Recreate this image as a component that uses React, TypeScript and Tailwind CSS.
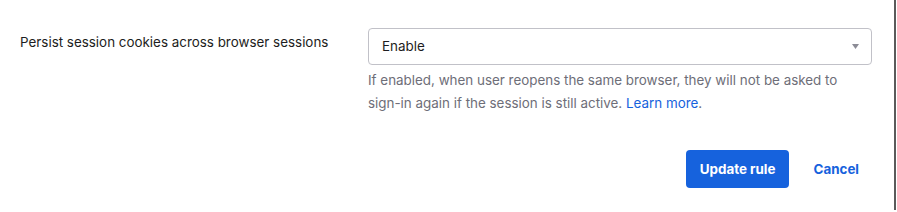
import React from 'react';

const font = { fontFamily: 'Inter, "Noto Sans", sans-serif' };

export default function App() {
  return (
    <div className="w-[897px] h-[212px] bg-white flex" style={font}>
      <div className="flex-1 flex flex-col pl-5 pt-7">
        {/* field row */}
        <div className="flex">
          <div className="w-[348px] pt-[5px] text-[13.4px] leading-[18px] text-[#1d1d21]">
            Persist session cookies across browser sessions
          </div>
          <div className="w-[504px] flex flex-col">
            <div className="h-[37px] border border-[#c1c1c8] rounded-[4px] flex items-center justify-between pl-[13px] pr-[12px]">
              <span className="text-[13.4px] text-[#1d1d21]">Enable</span>
              <svg width="7" height="5" viewBox="0 0 7 5">
                <path d="M0 0 H7 L3.5 5 Z" fill="#8c8c96" />
              </svg>
            </div>
            <p className="mt-[4px] text-[13.4px] leading-[23px] text-[#6e6e78]">
              If enabled, when user reopens the same browser, they will not be asked to sign-in again if the
              session is still active.{' '}
              <a href="#" className="text-[#1662dd]">Learn more</a>.
            </p>
          </div>
        </div>

        {/* actions */}
        <div className="w-[852px] flex justify-end items-center mt-[35px]">
          <button className="h-[38px] px-[14px] rounded-[4px] bg-[#1662dd] text-white text-[13.4px] font-bold">
            Update rule
          </button>
          <button className="h-[38px] ml-[11px] px-[13px] text-[#1662dd] text-[13.4px] font-bold">
            Cancel
          </button>
        </div>
      </div>
      <div className="w-[2px] h-[210px] bg-[#5a5a5a] mr-[1px]" />
    </div>
  );
}
